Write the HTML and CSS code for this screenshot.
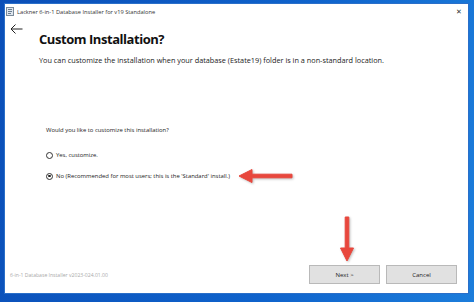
FILE: index.html
```html
<!DOCTYPE html>
<html>
<head>
<meta charset="utf-8">
<link rel="stylesheet" href="styles.css">
</head>
<body>
<div class="window">
  <div class="titlebar">
    <svg class="app-icon" width="8" height="9" viewBox="0 0 8 9"><rect x="0.5" y="0.5" width="7" height="8" fill="#dfe6ee" stroke="#7a8a9a"/><rect x="2" y="2" width="4" height="1" fill="#6a7d90"/><rect x="2" y="4" width="4" height="1" fill="#6a7d90"/><rect x="2" y="6" width="3" height="1" fill="#6a7d90"/></svg>
    <span class="title">Lackner 6-in-1 Database Installer for v19 Standalone</span>
    <span class="close">✕</span>
  </div>
  <div class="client">
    <div class="back">
      <svg width="13" height="10" viewBox="0 0 13 10"><path d="M12.5 5H1M5.5 0.5L1 5l4.5 4.5" fill="none" stroke="#222" stroke-width="1"/></svg>
    </div>
    <div class="main">
      <h1 class="heading">Custom Installation?</h1>
      <p class="subtitle">You can customize the installation when your database (Estate19) folder is in a non-standard location.</p>
      <div class="question">
        <p class="q">Would you like to customize this installation?</p>
        <label class="radio"><span class="dot"></span>Yes, customize.</label>
        <label class="radio checked"><span class="dot"></span>No (Recommended for most users; this is the 'Standard' install.)</label>
      </div>
    </div>
    <div class="footer">
      <span class="version">6-in-1 Database Installer v2023-024.01.00</span>
      <div class="buttons">
        <button class="btn">Next &gt;</button>
        <button class="btn">Cancel</button>
      </div>
    </div>
  </div>
  <svg class="arrow arrow-left" width="60" height="20" viewBox="0 0 60 20"><path d="M56 8.2H16V3.5L3 10l13 6.5v-4.7h40z" fill="#e8473d" stroke="#e8473d" stroke-width="1" stroke-linejoin="round"/></svg>
  <svg class="arrow arrow-down" width="20" height="50" viewBox="0 0 20 50"><path d="M8.2 3v31H3.5L10 47l6.5-13h-4.7V3z" fill="#e8473d" stroke="#e8473d" stroke-width="1" stroke-linejoin="round"/></svg>
</div>
</body>
</html>
```
FILE: styles.css
```css
html, body {
  margin: 0;
  padding: 0;
}
body {
  width: 474px;
  height: 302px;
  overflow: hidden;
  background: linear-gradient(100deg, #0b4fb8 0%, #0f63cc 60%, #1c7ddb 100%);
  padding: 4px 0 0 5px;
  box-sizing: border-box;
  font-family: "Open Sans", "Noto Sans", sans-serif;
}
.window {
  position: relative;
  width: 463px;
  height: 289px;
  background: #fff;
  display: flex;
  flex-direction: column;
  box-shadow: 0 0 0 1px #2a6fc9;
}
.titlebar {
  height: 15px;
  display: flex;
  align-items: center;
  padding: 0 6px 0 1px;
  gap: 3px;
}
.app-icon {
  flex: none;
}
.title {
  font-size: 5.7px;
  color: #333;
  flex: 1;
}
.close {
  font-size: 7px;
  color: #333;
}
.client {
  flex: 1;
  display: flex;
  flex-direction: column;
  position: relative;
}
.back {
  position: absolute;
  left: 5px;
  top: 5px;
  line-height: 0;
}
.main {
  flex: 1;
  padding: 11px 0 0 34px;
}
.heading {
  margin: 0;
  font-size: 13px;
  font-weight: 700;
  color: #111;
  line-height: 18px;
  letter-spacing: -0.45px;
}
.subtitle {
  margin: 7px 0 0;
  font-size: 7.3px;
  color: #222;
  line-height: 10px;
}
.question {
  padding: 60px 0 0 7px;
  display: flex;
  flex-direction: column;
}
.q {
  margin: 0 0 15px;
  font-size: 5.9px;
  color: #222;
  line-height: 10px;
}
.radio {
  display: flex;
  align-items: center;
  gap: 3px;
  font-size: 5.9px;
  color: #222;
  line-height: 10px;
  height: 10px;
  margin-bottom: 11px;
}
.dot {
  width: 7px;
  height: 7px;
  border: 1px solid #333;
  border-radius: 50%;
  box-sizing: border-box;
  position: relative;
  flex: none;
}
.checked .dot::after {
  content: "";
  position: absolute;
  left: 1.25px;
  top: 1.25px;
  width: 2.5px;
  height: 2.5px;
  border-radius: 50%;
  background: #222;
}
.footer {
  display: flex;
  align-items: center;
  justify-content: space-between;
  padding: 0 11px 9px 5px;
}
.version {
  font-size: 5.1px;
  color: #a9a9a9;
}
.buttons {
  display: flex;
  gap: 6px;
}
.btn {
  width: 71px;
  height: 19px;
  background: #e1e1e1;
  border: 1px solid #b9b9b9;
  font-family: inherit;
  font-size: 6px;
  color: #222;
  padding: 0;
}
.arrow {
  position: absolute;
  filter: drop-shadow(1px 1px 1px rgba(0,0,0,0.25));
}
.arrow-left {
  left: 231px;
  top: 162px;
}
.arrow-down {
  left: 332px;
  top: 210px;
}
```
